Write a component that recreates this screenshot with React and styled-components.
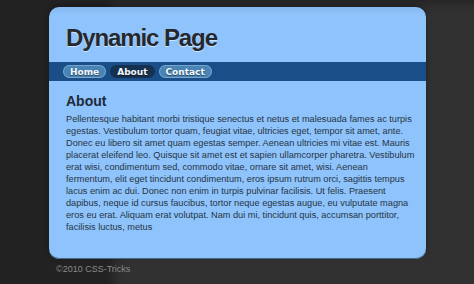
import React from 'react';
import styled, { createGlobalStyle } from 'styled-components';

const GlobalStyle = createGlobalStyle`
  html, body {
    margin: 0;
    padding: 0;
    background: #333333;
  }
  body {
    font-family: "Liberation Sans", Arial, sans-serif;
  }
`;

const NAV = [
  { label: 'Home', current: false },
  { label: 'About', current: true },
  { label: 'Contact', current: false },
];

const LINES = [
  'Pellentesque habitant morbi tristique senectus et netus et malesuada fames ac turpis',
  'egestas. Vestibulum tortor quam, feugiat vitae, ultricies eget, tempor sit amet, ante.',
  'Donec eu libero sit amet quam egestas semper. Aenean ultricies mi vitae est. Mauris',
  'placerat eleifend leo. Quisque sit amet est et sapien ullamcorper pharetra. Vestibulum',
  'erat wisi, condimentum sed, commodo vitae, ornare sit amet, wisi. Aenean',
  'fermentum, elit eget tincidunt condimentum, eros ipsum rutrum orci, sagittis tempus',
  'lacus enim ac dui. Donec non enim in turpis pulvinar facilisis. Ut felis. Praesent',
  'dapibus, neque id cursus faucibus, tortor neque egestas augue, eu vulputate magna',
  'eros eu erat. Aliquam erat volutpat. Nam dui mi, tincidunt quis, accumsan porttitor,',
  'facilisis luctus, metus',
];

export default function App() {
  return (
    <PageStyled>
      <GlobalStyle />
      <CardStyled>
        <HeaderStyled>
          <TitleStyled>Dynamic Page</TitleStyled>
        </HeaderStyled>
        <NavStyled>
          {NAV.map(item => (
            <NavButton key={item.label} $current={item.current}>
              {item.label}
            </NavButton>
          ))}
        </NavStyled>
        <ContentStyled>
          <HeadingStyled>About</HeadingStyled>
          <TextStyled>
            {LINES.map(line => (
              <LineStyled key={line}>{line}</LineStyled>
            ))}
          </TextStyled>
        </ContentStyled>
      </CardStyled>
      <FooterStyled>©2010 CSS-Tricks</FooterStyled>
    </PageStyled>
  );
}

const PageStyled = styled.div`
  width: 474px;
  height: 284px;
  box-sizing: border-box;
  padding: 7px 48px 0 49px;
  overflow: hidden;
  background: #313131;
  box-shadow: inset 120px 9px 10px -6px rgba(0, 0, 0, 0.3);
`;

const CardStyled = styled.div`
  height: 252px;
  box-sizing: border-box;
  background: linear-gradient(to bottom, #86b8ee 0px, #8fc3fb 8px);
  border-radius: 10px;
  box-shadow: inset 0 -1px 0 #46698c, 0 -2px 6px rgba(0, 0, 0, 0.3);
  display: flex;
  flex-direction: column;
`;

const HeaderStyled = styled.div`
  height: 55px;
  padding: 17px 0 0 17px;
  box-sizing: border-box;
`;

const TitleStyled = styled.h1`
  margin: 0;
  font-size: 24px;
  line-height: 28px;
  font-weight: bold;
  letter-spacing: -1.1px;
  color: #23292f;
  text-shadow: 0 1px 1px rgba(255, 255, 255, 0.6);
`;

const NavStyled = styled.div`
  height: 19px;
  background: #1a4e88;
  display: flex;
  align-items: center;
  gap: 4px;
  padding-left: 14px;
`;

const NavButton = styled.div`
  height: 13px;
  padding: 0 7px;
  border-radius: 7px;
  display: flex;
  align-items: center;
  font-family: "DejaVu Sans", sans-serif;
  font-size: 9px;
  font-weight: bold;
  color: #f4f8fc;
  text-shadow: 0 1px 1px rgba(0, 0, 0, 0.5);
  background: ${({ $current }) => ($current ? '#16314f' : '#4a84b4')};
  box-shadow: ${({ $current }) =>
    $current ? 'none' : 'inset 0 0 0 1px rgba(150, 190, 225, 0.6)'};
`;

const ContentStyled = styled.div`
  padding: 12px 8px 0 17px;
`;

const HeadingStyled = styled.h2`
  margin: 0 0 4px;
  font-size: 14px;
  line-height: 16px;
  font-weight: bold;
  color: #1d2a38;
`;

const TextStyled = styled.p`
  margin: 0;
  font-size: 9.2px;
  line-height: 12px;
  color: #263444;
`;

const LineStyled = styled.span`
  display: block;
  white-space: nowrap;
`;

const FooterStyled = styled.div`
  padding: 4px 0 0 7px;
  font-size: 9px;
  line-height: 12px;
  color: #8a8a8a;
`;
